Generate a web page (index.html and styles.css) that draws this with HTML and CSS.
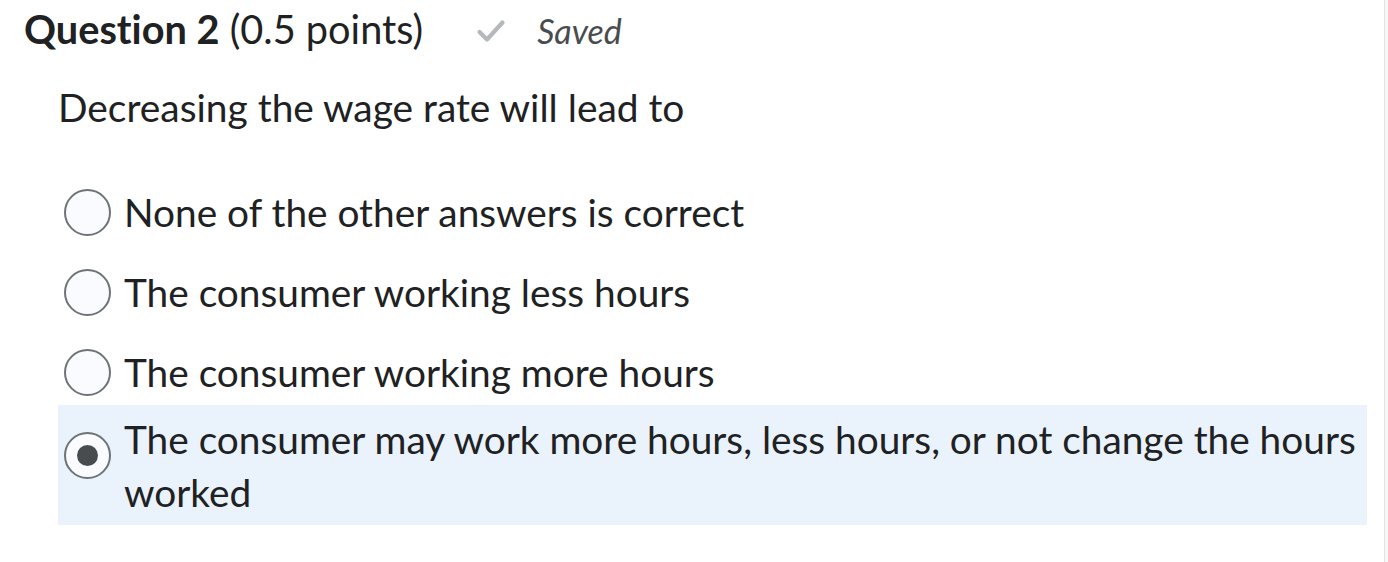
FILE: index.html
```html
<!DOCTYPE html>
<html>
<head>
<meta charset="utf-8">
<link rel="stylesheet" href="styles.css">
</head>
<body>
<div class="page">
  <div class="header">
    <h2 class="title"><strong>Question 2</strong> <span class="points">(0.5 points)</span></h2>
    <span class="status">
      <svg class="check" width="30" height="26" viewBox="0 0 30 26"><path d="M3.5 14 L11 21.5 L26.5 4.5" fill="none" stroke="#b4b9bc" stroke-width="4.2" stroke-linecap="round" stroke-linejoin="round"/></svg>
      <em class="saved">Saved</em>
    </span>
  </div>
  <p class="prompt">Decreasing the wage rate will lead to</p>
  <div class="options">
    <label class="option"><span class="radio"></span><span class="text">None of the other answers is correct</span></label>
    <label class="option"><span class="radio"></span><span class="text">The consumer working less hours</span></label>
    <label class="option"><span class="radio"></span><span class="text">The consumer working more hours</span></label>
    <label class="option selected"><span class="radio checked"></span><span class="text">The consumer may work more hours, less hours, or not change the hours worked</span></label>
  </div>
</div>
<div class="scrollbar"></div>
</body>
</html>
```

FILE: styles.css
```css
html, body {
  margin: 0;
  padding: 0;
  background: #ffffff;
  height: 100%;
}
body {
  font-family: Lato, "Noto Sans", sans-serif;
  font-feature-settings: "liga" 0;
  color: #202122;
  display: flex;
  overflow: hidden;
}
.page {
  flex: 1;
  padding: 0 17px 0 24px;
}
.header {
  display: flex;
  align-items: baseline;
  height: 62px;
}
.title {
  margin: -2px 0 0;
  font-size: 39.7px;
  font-weight: 400;
  line-height: 62px;
}
.title strong {
  font-weight: 700;
}
.status {
  display: inline-flex;
  align-items: baseline;
  margin-left: 53px;
}
.check {
  align-self: center;
  margin-right: 31px;
}
.saved {
  font-size: 34px;
  color: #494c4e;
}
.prompt {
  margin: 18px 0 0 34px;
  font-size: 38.9px;
  line-height: 54px;
}
.options {
  margin: 46px 0 0 34px;
  display: flex;
  flex-direction: column;
  gap: 15px;
}
.option {
  display: flex;
  align-items: flex-start;
  gap: 13px;
  padding: 6px 0 6px 6px;
  font-size: 38.8px;
  line-height: 53px;
}
.radio {
  flex: none;
  width: 43px;
  height: 43px;
  border: 2px solid #6e7376;
  border-radius: 50%;
  background: #f9fbff;
  margin-top: 3px;
  display: flex;
  align-items: center;
  justify-content: center;
}
.selected {
  background: #eaf2fc;
  margin-top: -15px;
  padding-top: 8px;
}
.selected .radio {
  margin-top: 19px;
}
.checked::after {
  content: "";
  width: 21px;
  height: 21px;
  border-radius: 50%;
  background: #494c4e;
}
.scrollbar {
  flex: none;
  width: 3px;
  border-left: 1px solid #e3e3e3;
  background: #f7f7f7;
}
```
